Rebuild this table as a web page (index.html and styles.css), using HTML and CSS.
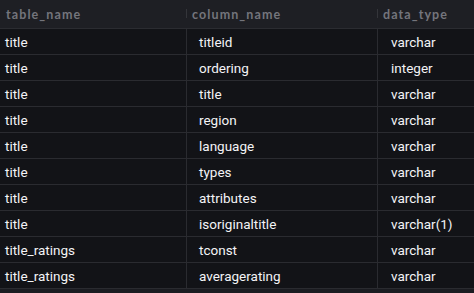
FILE: index.html
```html
<!DOCTYPE html>
<html lang="en">
<head>
<meta charset="utf-8">
<title>columns</title>
<link rel="stylesheet" href="styles.css">
</head>
<body>
<div class="grid">
  <div class="hcell"><span>table_name</span></div>
  <div class="hcell sep"><span>column_name</span></div>
  <div class="hcell sep"><span>data_type</span></div>

  <div class="cell">title</div><div class="cell vl">titleid</div><div class="cell vl">varchar</div>
  <div class="cell">title</div><div class="cell vl">ordering</div><div class="cell vl">integer</div>
  <div class="cell">title</div><div class="cell vl">title</div><div class="cell vl">varchar</div>
  <div class="cell">title</div><div class="cell vl">region</div><div class="cell vl">varchar</div>
  <div class="cell">title</div><div class="cell vl">language</div><div class="cell vl">varchar</div>
  <div class="cell">title</div><div class="cell vl">types</div><div class="cell vl">varchar</div>
  <div class="cell">title</div><div class="cell vl">attributes</div><div class="cell vl">varchar</div>
  <div class="cell">title</div><div class="cell vl">isoriginaltitle</div><div class="cell vl">varchar(1)</div>
  <div class="cell">title_ratings</div><div class="cell vl">tconst</div><div class="cell vl">varchar</div>
  <div class="cell">title_ratings</div><div class="cell vl">averagerating</div><div class="cell vl">varchar</div>
</div>
</body>
</html>
```

FILE: styles.css
```css
html, body {
  margin: 0;
  padding: 0;
  background: #1b1c21;
  height: 100%;
}
body {
  font-family: Roboto, Lato, "Noto Sans", sans-serif;
  color: #f4f4f6;
  overflow: hidden;
}
.grid {
  display: grid;
  grid-template-columns: 186px 191px 97px;
  grid-auto-rows: 26px;
  grid-template-rows: 29px;
  background: #121317;
}
.hcell {
  background: #1e1f24;
  border-bottom: 1px solid #2b2c31;
  display: flex;
  align-items: center;
  padding-left: 6px;
  padding-top: 1px;
  font-family: Lato, sans-serif;
  font-size: 12.5px;
  font-weight: 700;
  letter-spacing: 1.1px;
  color: #74757c;
  position: relative;
}
.hcell.sep::before {
  content: "";
  position: absolute;
  left: 0;
  top: 9px;
  bottom: 10px;
  width: 1px;
  background: #34353a;
}
.cell {
  border-bottom: 1px solid #2a2b30;
  display: flex;
  align-items: center;
  padding-left: 5px;
  padding-top: 1px;
  font-size: 13.5px;
  font-weight: 400;
}
.cell.vl {
  border-left: 1px solid #2a2b30;
  padding-left: 12px;
}
.grid > .cell:nth-child(3n) {
  padding-left: 13px;
}
```
